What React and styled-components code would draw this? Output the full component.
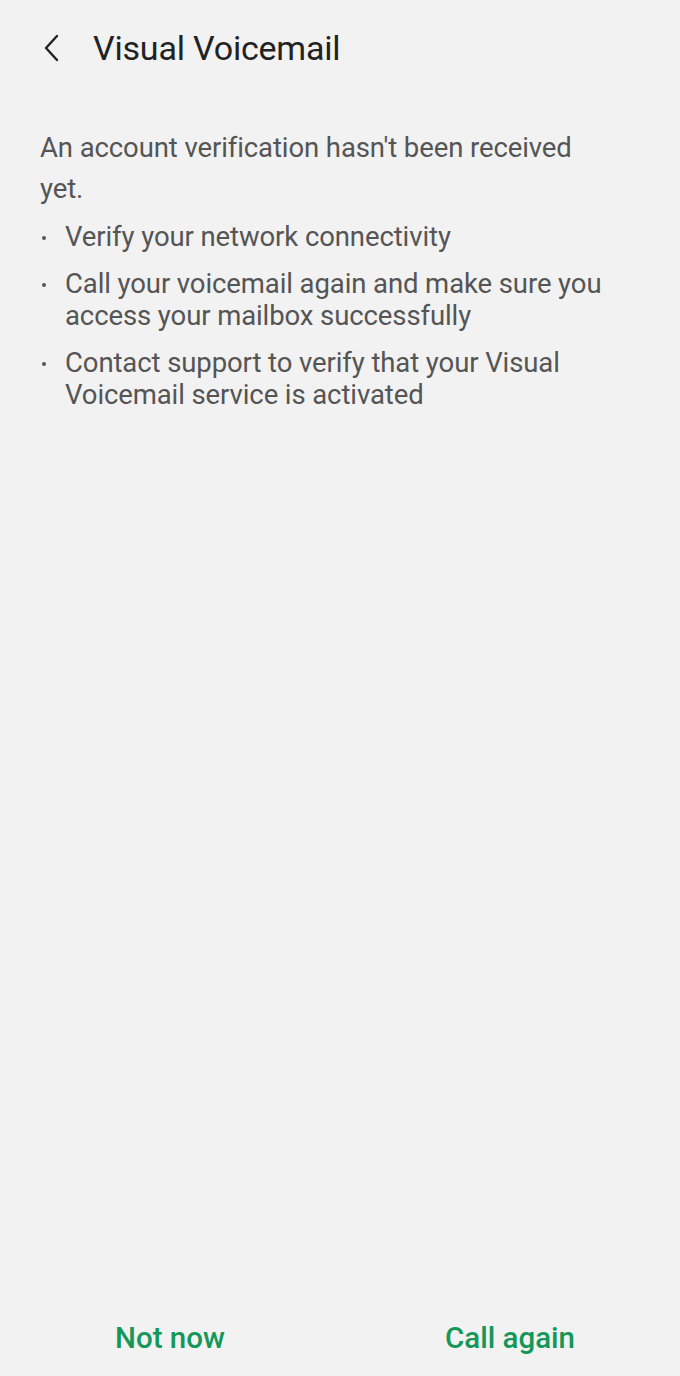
import React from 'react';
import styled, { createGlobalStyle } from 'styled-components';

const GlobalStyle = createGlobalStyle`
  html, body {
    margin: 0;
    padding: 0;
    background: #f2f2f2;
  }
  body {
    font-family: Roboto, "Noto Sans", sans-serif;
  }
`;

const Screen = styled.div`
  display: flex;
  flex-direction: column;
  width: 680px;
  height: 1376px;
  background: #f2f2f2;
  overflow: hidden;
`;

const Header = styled.div`
  display: flex;
  align-items: center;
  height: 96px;
  padding-left: 36px;
`;

const BackButton = styled.button`
  display: flex;
  align-items: center;
  justify-content: center;
  width: 32px;
  height: 40px;
  padding: 0;
  margin-right: 25px;
  border: none;
  background: none;
  cursor: pointer;
`;

const Title = styled.h1`
  margin: 0;
  font-size: 34px;
  font-weight: 400;
  color: #222;
  letter-spacing: -0.2px;
`;

const Content = styled.div`
  flex: 1;
  padding: 31px 60px 0 40px;
  color: #555;
`;

const Message = styled.p`
  margin: 0 0 12px;
  font-size: 27.5px;
  line-height: 41px;
  letter-spacing: -0.1px;
`;

const List = styled.ul`
  margin: 0;
  padding: 0;
  list-style: none;
`;

const Item = styled.li`
  position: relative;
  padding-left: 25px;
  margin-bottom: 15px;
  font-size: 27.5px;
  line-height: 32px;
  letter-spacing: -0.1px;

  &::before {
    content: '';
    position: absolute;
    left: 2px;
    top: 15px;
    width: 4px;
    height: 4px;
    border-radius: 50%;
    background: #555;
  }
`;

const Footer = styled.div`
  display: grid;
  grid-template-columns: 1fr 1fr;
  align-items: center;
  height: 76px;
`;

const ActionButton = styled.button`
  border: none;
  background: none;
  padding: 0;
  font-family: Roboto, "Noto Sans", sans-serif;
  font-size: 29.5px;
  font-weight: 500;
  color: #15975a;
  cursor: pointer;
  height: 76px;
`;

const ChevronLeft = () => (
  <svg width="22" height="30" viewBox="0 0 22 30" fill="none">
    <path d="M16 3 L5 15 L16 27" stroke="#222" strokeWidth="2.4" strokeLinecap="round" strokeLinejoin="round" />
  </svg>
);

const tips = [
  'Verify your network connectivity',
  'Call your voicemail again and make sure you access your mailbox successfully',
  'Contact support to verify that your Visual Voicemail service is activated',
];

const App = () => (
  <>
    <GlobalStyle />
    <Screen>
      <Header>
        <BackButton aria-label="Back">
          <ChevronLeft />
        </BackButton>
        <Title>Visual Voicemail</Title>
      </Header>
      <Content>
        <Message>An account verification hasn't been received yet.</Message>
        <List>
          {tips.map((tip) => (
            <Item key={tip}>{tip}</Item>
          ))}
        </List>
      </Content>
      <Footer>
        <ActionButton>Not now</ActionButton>
        <ActionButton>Call again</ActionButton>
      </Footer>
    </Screen>
  </>
);

export default App;
